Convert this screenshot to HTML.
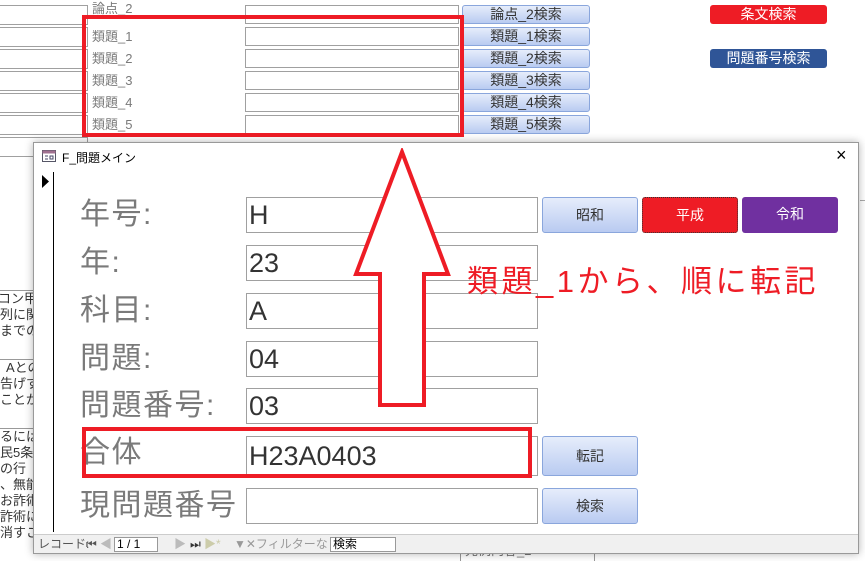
<!DOCTYPE html>
<html><head><meta charset="utf-8"><style>
*{margin:0;padding:0;box-sizing:border-box}
body{width:865px;height:561px;overflow:hidden;background:#fff;position:relative;font-family:"Liberation Sans","Noto Sans CJK JP",sans-serif}
.a{position:absolute}
.cell{position:absolute;border:1px solid #a0a0a0;background:#fff}
.lbl{position:absolute;color:#7a7a7a;font-size:13px}
.btn{position:absolute;border:1px solid #8aa6dc;border-radius:3px;background:linear-gradient(#e6edfb,#b9cbf1);color:#333;font-size:14px;text-align:center}
.flbl{position:absolute;left:80px;color:#7a7a7a;font-size:30px;line-height:36px;letter-spacing:1.5px}
.box{position:absolute;left:246px;width:292px;border:1px solid #a0a0a0;background:#fff;color:#333;font-size:27px;padding-left:2px;line-height:34px}
.fb{position:absolute;width:96px;height:36px;border-radius:3px;font-size:14px;text-align:center;line-height:34px}
</style></head><body>
<div class="cell" style="left:-2px;top:5px;width:90px;height:20px"></div>
<div class="cell" style="left:-2px;top:27px;width:90px;height:20px"></div>
<div class="cell" style="left:-2px;top:49px;width:90px;height:20px"></div>
<div class="cell" style="left:-2px;top:71px;width:90px;height:20px"></div>
<div class="cell" style="left:-2px;top:93px;width:90px;height:20px"></div>
<div class="cell" style="left:-2px;top:115px;width:90px;height:20px"></div>
<div class="cell" style="left:-2px;top:137px;width:90px;height:20px"></div>
<div class="a" style="left:0;top:290px;width:34px;height:256px;border-top:1px solid #999;font-size:13px;line-height:16px;color:#333;overflow:hidden;white-space:nowrap">
<div style="margin-left:-2px">コン甲</div><div>列に関</div><div>までの</div><div style="border-top:1px solid #999;margin-top:20px;padding-left:6px">Aとの</div><div>告げす</div><div>ことが</div><div style="border-top:1px solid #999;margin-top:20px">るには</div><div>民5条</div><div>の行</div><div>、無能</div><div>お詐術</div><div>詐術に</div><div>消すこ</div></div>
<div class="lbl" style="left:92px;top:-2px">論点_2</div>
<div class="lbl" style="left:92px;top:26px">類題_1</div>
<div class="lbl" style="left:92px;top:48px">類題_2</div>
<div class="lbl" style="left:92px;top:70px">類題_3</div>
<div class="lbl" style="left:92px;top:92px">類題_4</div>
<div class="lbl" style="left:92px;top:114px">類題_5</div>
<div class="cell" style="left:245px;top:5px;width:214px;height:19px"></div>
<div class="cell" style="left:245px;top:27px;width:214px;height:19px"></div>
<div class="cell" style="left:245px;top:49px;width:214px;height:19px"></div>
<div class="cell" style="left:245px;top:71px;width:214px;height:19px"></div>
<div class="cell" style="left:245px;top:93px;width:214px;height:19px"></div>
<div class="cell" style="left:245px;top:115px;width:214px;height:19px"></div>
<div class="btn" style="left:462px;top:5px;width:128px;height:19px;line-height:17px">論点_2検索</div>
<div class="btn" style="left:462px;top:27px;width:128px;height:19px;line-height:17px">類題_1検索</div>
<div class="btn" style="left:462px;top:49px;width:128px;height:19px;line-height:17px">類題_2検索</div>
<div class="btn" style="left:462px;top:71px;width:128px;height:19px;line-height:17px">類題_3検索</div>
<div class="btn" style="left:462px;top:93px;width:128px;height:19px;line-height:17px">類題_4検索</div>
<div class="btn" style="left:462px;top:115px;width:128px;height:19px;line-height:17px">類題_5検索</div>
<div class="a" style="left:710px;top:5px;width:117px;height:19px;background:#ee1c25;border-radius:3px;color:#fff;font-size:14px;text-align:center;line-height:19px">条文検索</div>
<div class="a" style="left:710px;top:49px;width:117px;height:19px;background:#2f5597;border-radius:3px;color:#fff;font-size:14px;text-align:center;line-height:19px">問題番号検索</div>
<div class="a" style="left:860px;top:200px;width:5px;height:340px;border-top:1px solid #aaa"></div>
<div class="a" style="left:460px;top:540px;width:135px;height:21px;border-left:1px solid #999;border-right:1px solid #999;font-size:13px;color:#777;padding-left:4px">先例内容_2</div>
<div class="a" style="left:82px;top:15px;width:382px;height:122px;border:4px solid #ee1c25"></div>
<div class="a" style="left:33px;top:142px;width:826px;height:412px;background:#fff;border:1px solid #999;box-shadow:0 0 8px rgba(0,0,0,.3)"></div>
<svg class="a" style="left:42px;top:150px" width="14" height="12"><rect x="0.5" y="0.5" width="13" height="11" fill="#fff" stroke="#556"/><rect x="0.5" y="0.5" width="13" height="3" fill="#a07090"/><path d="M3 6h3M3 9h3M8 6h3v3h-3z" stroke="#446" fill="none"/></svg>
<div class="a" style="left:62px;top:149px;font-size:12px;color:#000">F_問題メイン</div>
<div class="a" style="left:836px;top:145px;font-size:18px;color:#000">×</div>
<div class="a" style="left:53px;top:172px;width:1px;height:360px;background:#000"></div>
<svg class="a" style="left:42px;top:175px" width="8" height="13"><path d="M0 0L7 6.5L0 13z" fill="#000"/></svg>
<div class="flbl" style="top:197px">年号:</div>
<div class="flbl" style="top:245px">年:</div>
<div class="flbl" style="top:293px">科目:</div>
<div class="flbl" style="top:341px">問題:</div>
<div class="flbl" style="top:388px">問題番号:</div>
<div class="flbl" style="top:435px">合体</div>
<div class="flbl" style="top:488px">現問題番号</div>
<div class="box" style="top:197px;height:36px">H</div>
<div class="box" style="top:245px;height:36px">23</div>
<div class="box" style="top:293px;height:36px">A</div>
<div class="box" style="top:341px;height:36px">04</div>
<div class="box" style="top:388px;height:36px">03</div>
<div class="box" style="top:436px;height:40px;line-height:38px">H23A0403</div>
<div class="box" style="top:488px;height:36px"></div>
<div class="btn fb" style="left:542px;top:197px">昭和</div>
<div class="fb" style="left:642px;top:197px;background:#ee1c25;color:#fff;border:1px dotted #333">平成</div>
<div class="fb" style="left:742px;top:197px;background:#7030a0;color:#fff">令和</div>
<div class="btn fb" style="left:542px;top:436px;height:40px;line-height:38px">転記</div>
<div class="btn fb" style="left:542px;top:488px">検索</div>
<div class="a" style="left:467px;top:256px;color:#ee1c25;font-size:31px;letter-spacing:3.5px;white-space:nowrap">類題_1から、順に転記</div>
<svg class="a" style="left:350px;top:148px" width="104" height="262"><path d="M52 4L98 126H74V257H30V126H6Z" fill="#fff" stroke="#ee1c25" stroke-width="4"/></svg>
<div class="a" style="left:82px;top:427px;width:450px;height:51px;border:4px solid #ee1c25"></div>
<div class="a" style="left:34px;top:534px;width:824px;height:19px;background:#f0f0f0;border-top:1px solid #ccc;font-size:12px;color:#555;line-height:18px">
<span class="a" style="left:4px">レコード:</span>
<span class="a" style="left:52px">⏮</span>
<span class="a" style="left:66px;color:#bbb">◀</span>
<span class="a" style="left:80px;top:2px;width:44px;height:15px;background:#fff;border:1px solid #999;line-height:13px;color:#000;padding-left:2px">1 / 1</span>
<span class="a" style="left:140px;color:#bbb">▶</span>
<span class="a" style="left:156px;color:#333">⏭</span>
<span class="a" style="left:170px;color:#cca">▶*</span>
<span class="a" style="left:200px;color:#999">▼✕フィルターなし</span>
<span class="a" style="left:296px;top:2px;width:66px;height:15px;background:#fff;border:1px solid #999;line-height:13px;color:#000;padding-left:2px">検索</span>
</div>
</body></html>
